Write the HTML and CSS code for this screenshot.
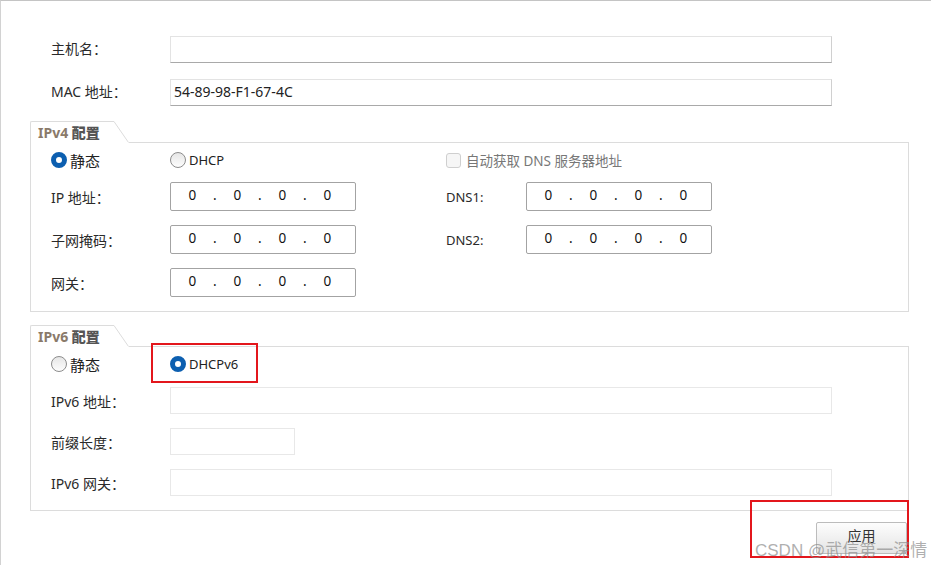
FILE: index.html
```html
<!DOCTYPE html>
<html>
  <head>
    <meta charset="utf-8">
    <title>网络设置</title>
    <link rel="stylesheet" href="styles.css">
  </head>
  <body>
    <div class="page">
      <div class="field top">
        <label>主机名：</label>
        <div class="text-input wide"></div>
      </div>
      <div class="field top">
        <label>MAC 地址：</label>
        <div class="text-input wide">54-89-98-F1-67-4C</div>
      </div>

      <!-- IPv4 -->
      <div class="group v4">
        <div class="group-head">
          <div class="tab">IPv4 <b>配置</b></div>
          <svg class="tab-slope" width="15" height="22" viewBox="0 0 15 22">
            <path d="M0 0.5 L14.5 21.5" stroke="#dcdcdc" stroke-width="1" fill="none" />
          </svg>
          <div class="head-fill"></div>
        </div>
        <div class="group-body">
          <div class="choice-row">
            <div class="choice"><span class="radio on"></span>静态</div>
            <div class="choice dhcp"><span class="radio"></span>DHCP</div>
            <div class="choice muted"><span class="check"></span>自动获取 DNS 服务器地址</div>
          </div>
          <div class="ip-rows">
            <div class="field">
              <label>IP 地址：</label>
              <div class="ip-input"><span>0</span><i>.</i><span>0</span><i>.</i><span>0</span><i>.</i><span>0</span></div>
              <label class="dns-label">DNS1:</label>
              <div class="ip-input"><span>0</span><i>.</i><span>0</span><i>.</i><span>0</span><i>.</i><span>0</span></div>
            </div>
            <div class="field">
              <label>子网掩码：</label>
              <div class="ip-input"><span>0</span><i>.</i><span>0</span><i>.</i><span>0</span><i>.</i><span>0</span></div>
              <label class="dns-label">DNS2:</label>
              <div class="ip-input"><span>0</span><i>.</i><span>0</span><i>.</i><span>0</span><i>.</i><span>0</span></div>
            </div>
            <div class="field">
              <label>网关：</label>
              <div class="ip-input"><span>0</span><i>.</i><span>0</span><i>.</i><span>0</span><i>.</i><span>0</span></div>
            </div>
          </div>
        </div>
      </div>

      <!-- IPv6 -->
      <div class="group v6">
        <div class="group-head">
          <div class="tab">IPv6 <b>配置</b></div>
          <svg class="tab-slope" width="15" height="22" viewBox="0 0 15 22">
            <path d="M0 0.5 L14.5 21.5" stroke="#dcdcdc" stroke-width="1" fill="none" />
          </svg>
          <div class="head-fill"></div>
        </div>
        <div class="group-body">
          <div class="choice-row">
            <div class="choice"><span class="radio"></span>静态</div>
            <div class="choice dhcp marked"><span class="radio on"></span>DHCPv6<span class="red-box mark-dhcp"></span></div>
          </div>
          <div class="v6-rows">
            <div class="field">
              <label>IPv6 地址：</label>
              <div class="text-input off wide"></div>
            </div>
            <div class="field">
              <label>前缀长度：</label>
              <div class="text-input off short"></div>
            </div>
            <div class="field">
              <label>IPv6 网关：</label>
              <div class="text-input off wide"></div>
            </div>
          </div>
        </div>
      </div>

      <div class="actions">
        <button class="apply">应用</button>
        <span class="red-box mark-apply"></span>
        <span class="watermark">CSDN @武信第一深情</span>
      </div>
    </div>
  </body>
</html>
```

FILE: styles.css
```css
html,
body {
  margin: 0;
  padding: 0;
  background: #fff;
}

body {
  font-family: "Noto Sans", "Noto Sans CJK SC", sans-serif;
  font-size: 13px;
  color: #333;
  width: 931px;
  height: 565px;
  overflow: hidden;
}

.page {
  position: relative;
  box-sizing: border-box;
  height: 565px;
  border-top: 1px solid #c4c4c4;
  border-left: 1px solid #d2d2d2;
  padding-top: 35px;
}

.field {
  display: flex;
  align-items: center;
  padding-left: 50px;
}

.field label {
  width: 119px;
  flex: none;
  font-size: 14px;
  color: #2a2a2a;
}

.field.top {
  height: 27px;
  margin-bottom: 16px;
}

.field.top label {
  margin-top: -3px;
}

.text-input {
  box-sizing: border-box;
  height: 27px;
  border: 1px solid #e3e3e3;
  border-bottom-color: #a9a9a9;
  border-right-color: #d0d0d0;
  padding: 0 3px;
  line-height: 24px;
  font-size: 14px;
  color: #222;
}

.text-input.wide {
  width: 662px;
}

.text-input.short {
  width: 125px;
}

.text-input.off {
  border: 1px solid #e8e8e8;
}

/* group box */
.group {
  margin-left: 29px;
  width: 879px;
}

.v4 {
  margin-top: -1px;
}

.v6 {
  margin-top: 13px;
}

.group-head {
  display: flex;
  height: 22px;
}

.tab {
  box-sizing: border-box;
  width: 84px;
  border-left: 1px solid #dcdcdc;
  border-top: 1px solid #dcdcdc;
  border-top-left-radius: 2px;
  padding-left: 7px;
  line-height: 21px;
  font-size: 14px;
  color: #8a7a6a;
  font-weight: bold;
  white-space: nowrap;
}

.tab b {
  color: #555;
}

.tab-slope {
  display: block;
  flex: none;
}

.head-fill {
  flex: 1;
  border-bottom: 1px solid #dcdcdc;
}

.group-body {
  border: 1px solid #dcdcdc;
  border-top: none;
  padding: 9px 0 14px 20px;
}

.group-body .field {
  padding-left: 0;
}

.choice-row {
  display: flex;
  align-items: center;
  height: 16px;
}

.choice {
  display: flex;
  align-items: center;
  width: 119px;
  font-size: 15px;
  color: #222;
}

.choice.dhcp {
  width: 276px;
  font-size: 13px;
}

.choice.muted {
  width: auto;
  font-size: 13.5px;
  color: #777;
}

.choice.marked {
  position: relative;
}

.radio {
  box-sizing: border-box;
  width: 16px;
  height: 16px;
  border-radius: 50%;
  border: 1px solid #8c8c8c;
  background: linear-gradient(#e6e6e6, #fdfdfd);
  margin-right: 3px;
  flex: none;
}

.radio.on {
  border: 5px solid #0c5fb0;
  background: #fff;
}

.check {
  box-sizing: border-box;
  width: 15px;
  height: 15px;
  border: 1px solid #cfcfcf;
  border-radius: 3px;
  background: #f6f6f6;
  margin-right: 5px;
}

.ip-rows {
  display: flex;
  flex-direction: column;
  gap: 14px;
  margin-top: 14px;
}

.ip-rows .field {
  height: 29px;
}

.ip-input {
  box-sizing: border-box;
  display: flex;
  width: 186px;
  height: 29px;
  border: 1px solid #a3a3a3;
  border-radius: 2px;
  padding-left: 10px;
  line-height: 24px;
  font-size: 13.5px;
  color: #111;
}

.ip-input span,
.ip-input i {
  width: 22.5px;
  text-align: center;
  font-style: normal;
}

.dns-label.dns-label {
  width: 80px;
  margin-left: 90px;
  font-size: 13px;
}

.v6-rows {
  display: flex;
  flex-direction: column;
  gap: 14px;
  margin-top: 15px;
}

.v6-rows .field {
  height: 27px;
}

.actions {
  position: relative;
  display: flex;
  justify-content: flex-end;
  padding-right: 24px;
  margin-top: 11px;
}

.apply {
  width: 91px;
  height: 32px;
  border: 1px solid #bcbcbc;
  border-radius: 2px;
  background: linear-gradient(#fdfdfd, #e4e4e4);
  font-family: "Noto Sans CJK SC", sans-serif;
  font-size: 14px;
  line-height: 24px;
  color: #333;
  padding: 0 0 6px;
}

/* annotation overlays */
.red-box {
  position: absolute;
  box-sizing: border-box;
  border: 2px solid #e3161c;
}

.mark-dhcp {
  left: -19px;
  top: -12px;
  width: 107px;
  height: 40px;
}

.mark-apply {
  left: 749px;
  top: -22px;
  width: 159px;
  height: 58px;
}

.watermark {
  position: absolute;
  left: 754px;
  top: 14px;
  font-family: "Liberation Sans", "Noto Sans CJK SC", sans-serif;
  font-size: 17px;
  color: rgba(140, 140, 140, 0.7);
  white-space: nowrap;
}
```
